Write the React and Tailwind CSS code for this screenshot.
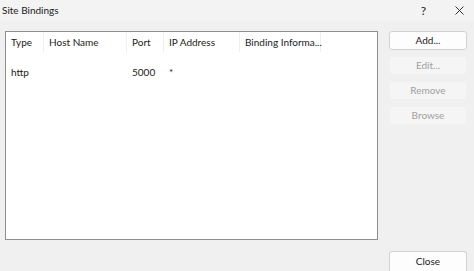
export default function App() {
  const cols = [
    { label: "Type", w: "w-[38px]" },
    { label: "Host Name", w: "w-[83px]" },
    { label: "Port", w: "w-[37px]" },
    { label: "IP Address", w: "w-[76px]" },
    { label: "Binding Informa...", w: "w-[81px]" },
  ];
  const row = ["http", "", "5000", "*", ""];

  return (
    <div
      className="flex h-[271px] w-[474px] flex-col overflow-hidden bg-[#f0f0f0] text-[10px] text-[#1a1a1a]"
      style={{ fontFamily: 'Lato, "Noto Sans", sans-serif' }}
    >
      <div className="flex h-[21px] items-center justify-between bg-[#f3f3f3] pl-[2px] pr-[10px]">
        <span className="text-[10px]">Site Bindings</span>
        <div className="flex items-center gap-[29px] text-[12px]">
          <span>?</span>
          {/* close glyph */}
          <svg width="9" height="9" viewBox="0 0 9 9" className="text-[#333]">
            <path d="M0.5 0.5 L8.5 8.5 M8.5 0.5 L0.5 8.5" stroke="currentColor" strokeWidth="1" fill="none" />
          </svg>
        </div>
      </div>

      <div className="flex flex-1 gap-[11px] pl-[5px] pt-[10px]">
        <div className="flex h-[209px] w-[373px] flex-col border border-[#8f8f8f] bg-white">
          <div className="flex h-[20px] items-stretch">
            {cols.map((c) => (
              <div
                key={c.label}
                className={`${c.w} flex items-center border-r border-[#efefef] pl-[5px] whitespace-nowrap`}
              >
                {c.label}
              </div>
            ))}
          </div>
          <div className="mt-[10px] flex h-[20px] items-center">
            {row.map((v, i) => (
              <div key={i} className={`${cols[i].w} pl-[5px]`}>
                {v}
              </div>
            ))}
          </div>
        </div>

        <div className="flex w-[78px] flex-col">
          <div className="flex flex-col gap-[6px]">
            <button className="h-[19px] rounded-[3px] border border-[#d0d0d0] bg-[#fdfdfd] text-[10px] text-[#1a1a1a]">
              Add...
            </button>
            <button className="h-[19px] rounded-[3px] border border-[#f0f0f0] bg-[#f5f5f5] text-[10px] text-[#a0a0a0]">
              Edit...
            </button>
            <button className="h-[19px] rounded-[3px] border border-[#f0f0f0] bg-[#f5f5f5] text-[10px] text-[#a0a0a0]">
              Remove
            </button>
            <button className="h-[19px] rounded-[3px] border border-[#f0f0f0] bg-[#f5f5f5] text-[10px] text-[#a0a0a0]">
              Browse
            </button>
          </div>
          <button className="mt-auto h-[20px] rounded-t-[3px] border border-b-0 border-[#d0d0d0] bg-[#fdfdfd] text-[10px] text-[#1a1a1a]">
            Close
          </button>
        </div>
      </div>
    </div>
  );
}
